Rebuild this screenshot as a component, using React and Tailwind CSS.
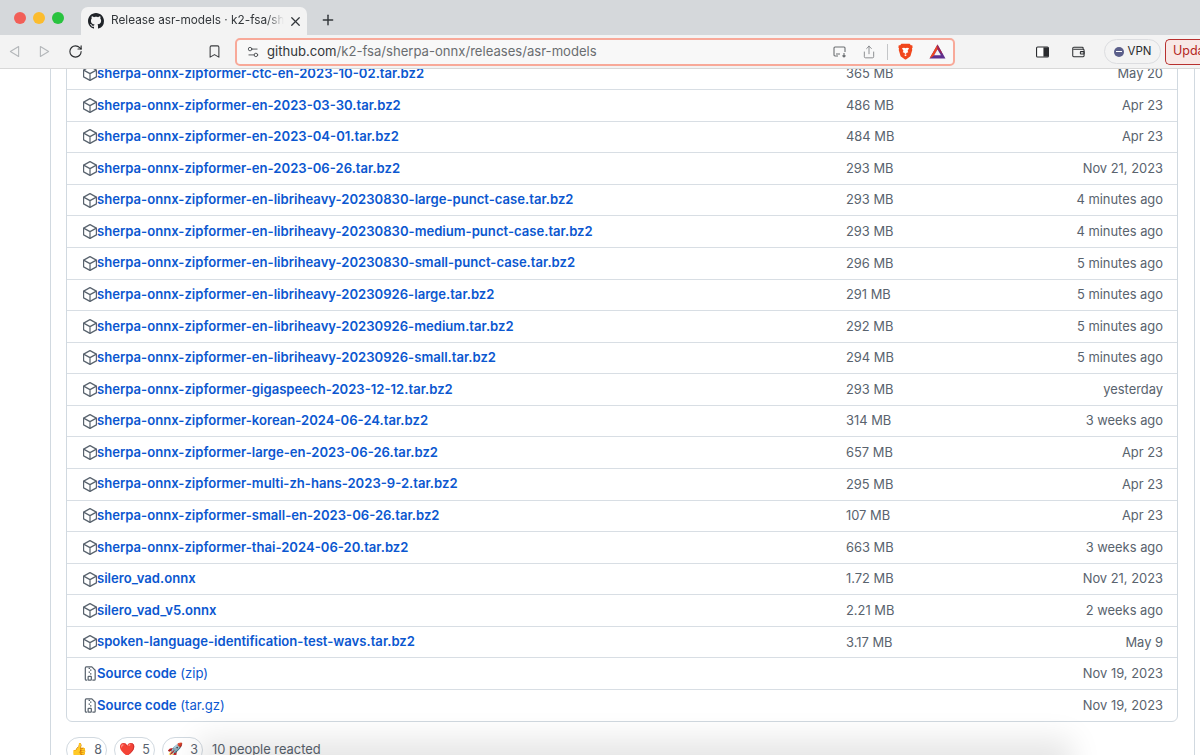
import React from "react";
import { X, Plus, RotateCw, Bookmark, Settings2, Share } from "lucide-react";

const assets = [
  { name: "sherpa-onnx-zipformer-ctc-en-2023-10-02.tar.bz2", size: "365 MB", date: "May 20" },
  { name: "sherpa-onnx-zipformer-en-2023-03-30.tar.bz2", size: "486 MB", date: "Apr 23" },
  { name: "sherpa-onnx-zipformer-en-2023-04-01.tar.bz2", size: "484 MB", date: "Apr 23" },
  { name: "sherpa-onnx-zipformer-en-2023-06-26.tar.bz2", size: "293 MB", date: "Nov 21, 2023" },
  { name: "sherpa-onnx-zipformer-en-libriheavy-20230830-large-punct-case.tar.bz2", size: "293 MB", date: "4 minutes ago" },
  { name: "sherpa-onnx-zipformer-en-libriheavy-20230830-medium-punct-case.tar.bz2", size: "293 MB", date: "4 minutes ago" },
  { name: "sherpa-onnx-zipformer-en-libriheavy-20230830-small-punct-case.tar.bz2", size: "296 MB", date: "5 minutes ago" },
  { name: "sherpa-onnx-zipformer-en-libriheavy-20230926-large.tar.bz2", size: "291 MB", date: "5 minutes ago" },
  { name: "sherpa-onnx-zipformer-en-libriheavy-20230926-medium.tar.bz2", size: "292 MB", date: "5 minutes ago" },
  { name: "sherpa-onnx-zipformer-en-libriheavy-20230926-small.tar.bz2", size: "294 MB", date: "5 minutes ago" },
  { name: "sherpa-onnx-zipformer-gigaspeech-2023-12-12.tar.bz2", size: "293 MB", date: "yesterday" },
  { name: "sherpa-onnx-zipformer-korean-2024-06-24.tar.bz2", size: "314 MB", date: "3 weeks ago" },
  { name: "sherpa-onnx-zipformer-large-en-2023-06-26.tar.bz2", size: "657 MB", date: "Apr 23" },
  { name: "sherpa-onnx-zipformer-multi-zh-hans-2023-9-2.tar.bz2", size: "295 MB", date: "Apr 23" },
  { name: "sherpa-onnx-zipformer-small-en-2023-06-26.tar.bz2", size: "107 MB", date: "Apr 23" },
  { name: "sherpa-onnx-zipformer-thai-2024-06-20.tar.bz2", size: "663 MB", date: "3 weeks ago" },
  { name: "silero_vad.onnx", size: "1.72 MB", date: "Nov 21, 2023" },
  { name: "silero_vad_v5.onnx", size: "2.21 MB", date: "2 weeks ago" },
  { name: "spoken-language-identification-test-wavs.tar.bz2", size: "3.17 MB", date: "May 9" },
  { name: "Source code", ext: "(zip)", date: "Nov 19, 2023" },
  { name: "Source code", ext: "(tar.gz)", date: "Nov 19, 2023" },
];

function PackageIcon() {
  return (
    <svg viewBox="1 0.5 14 15" className="w-[14px] h-[15px] shrink-0" fill="none" stroke="#59636e" strokeWidth="1.2" strokeLinejoin="round">
      <path d="M8 1.1 14.4 4.6v6.8L8 14.9 1.6 11.4V4.6Z" />
      <path d="M1.6 4.6 8 8.1l6.4-3.5M8 8.1v6.8" />
    </svg>
  );
}

function ZipIcon() {
  return (
    <svg viewBox="0 0 14 16" className="w-[14px] h-[15px] shrink-0" fill="none" stroke="#59636e" strokeWidth="1.3" strokeLinejoin="round">
      <path d="M4 15H3a1 1 0 0 1-1-1V2a1 1 0 0 1 1-1h6l3.5 3.5V14a1 1 0 0 1-1 1H9.5" />
      <path d="M5.5 2.5h1.5M7 4.5h1.5M5.5 6.5h1.5M7 8.5h1.5" />
      <rect x="5" y="11" width="3.4" height="4" rx="0.6" />
    </svg>
  );
}

function GithubMark() {
  return (
    <svg viewBox="0 0 16 16" className="w-4 h-4 shrink-0" fill="#1f2328">
      <path d="M8 0C3.58 0 0 3.58 0 8c0 3.54 2.29 6.53 5.47 7.59.4.07.55-.17.55-.38 0-.19-.01-.82-.01-1.49-2.01.37-2.53-.49-2.69-.94-.09-.23-.48-.94-.82-1.13-.28-.15-.68-.52-.01-.53.63-.01 1.08.58 1.23.82.72 1.21 1.87.87 2.33.66.07-.52.28-.87.51-1.07-1.78-.2-3.64-.89-3.64-3.95 0-.87.31-1.59.82-2.15-.08-.2-.36-1.02.08-2.12 0 0 .67-.21 2.2.82.64-.18 1.32-.27 2-.27s1.36.09 2 .27c1.53-1.04 2.2-.82 2.2-.82.44 1.1.16 1.92.08 2.12.51.56.82 1.27.82 2.15 0 3.07-1.87 3.75-3.65 3.95.29.25.54.73.54 1.48 0 1.07-.01 1.93-.01 2.2 0 .21.15.46.55.38A8.01 8.01 0 0 0 16 8c0-4.42-3.58-8-8-8Z" />
    </svg>
  );
}

function BraveLogo() {
  return (
    <svg viewBox="0 0 16 18" className="w-[15px] h-[17px]">
      <path d="M3.6.6h8.8l1.3 1.6 1.5.2.4 2.2-.7 1.2.3 1.6-2 6.6-4.7 3.4-.5.2-.5-.2-4.7-3.4-2-6.6.3-1.6-.7-1.2.4-2.2 1.5-.2Z" fill="#f1471d" />
      <path d="M4.2 5.6 6.4 5l1.6.6L9.6 5l2.2.6-1.6 2.6.8 1.6-1.6.6L8 12l-1.4-1.6-1.6-.6.8-1.6Z" fill="#fff" />
      <path d="M6.6 12.6 8 11.8l1.4.8L8 14Z" fill="#fff" />
    </svg>
  );
}

function RewardsLogo() {
  return (
    <svg viewBox="0 0 18 16" className="w-[17px] h-[15px]">
      <path d="M9 .5 17.5 15.5H.5Z" fill="#5f2f8e" />
      <path d="M9 .5 .5 15.5 5 12.6 9 5.5Z" fill="#f0441f" />
      <path d="M9 .5 13 7.6 14.8 11.5 9 5.5Z" fill="#a5224e" />
      <path d="M9 5.8 12.6 12H5.4Z" fill="#f3f3f3" />
    </svg>
  );
}

function AssetRow({ asset, last }) {
  return (
    <div className={`flex items-center pl-[16px] pr-[14px] ${last ? "h-[30.6px]" : "h-[31.58px] border-b border-[#d8dee4]"}`}>
      {asset.ext ? <ZipIcon /> : <PackageIcon />}
      <div className="flex-1 min-w-0 text-[13.1px] font-semibold text-[#0b57d0] whitespace-nowrap">
        {asset.name}
        {asset.ext && <span className="font-normal"> {asset.ext}</span>}
      </div>
      <div className="w-[100px] mr-[107px] text-[12.9px] text-[#59636e]">{asset.size}</div>
      <div className="w-[110px] text-right text-[12.9px] text-[#59636e]">{asset.date}</div>
    </div>
  );
}

function Reaction({ emoji, count }) {
  return (
    <div className="flex items-center justify-center gap-[7px] w-[41px] h-[26px] rounded-full border border-[#d1d9e0] text-[12.5px] text-[#59636e]">
      <span className="text-[13px]">{emoji}</span>
      {count}
    </div>
  );
}

export default function App() {
  return (
    <div className="relative w-[1200px] h-[755px] overflow-hidden flex flex-col bg-white font-['Inter','Liberation_Sans',sans-serif]">
      {/* tab strip */}
      <div className="h-[35px] shrink-0 bg-[#d5d8db] flex items-end">
        <div className="flex items-center gap-[7px] ml-[13.5px] h-[35px]">
          <span className="w-[12px] h-[12px] rounded-full bg-[#f25f58]" />
          <span className="w-[12px] h-[12px] rounded-full bg-[#fbbc2e]" />
          <span className="w-[12px] h-[12px] rounded-full bg-[#29c33f]" />
        </div>
        <div className="ml-[17.5px] w-[226px] h-[28px] bg-[#f3f3f3] rounded-t-[7px] flex items-center pl-[7px] pr-[4px] gap-[7px]">
          <GithubMark />
          <span className="flex-1 overflow-hidden whitespace-nowrap text-[11.8px] text-[#33373b] [mask-image:linear-gradient(to_right,black_90%,transparent)]">Release asr-models · k2-fsa/sherpa</span>
          <X size={15} strokeWidth={2} className="-ml-[3px] shrink-0 text-[#33373b]" />
        </div>
        <Plus size={16} strokeWidth={2.2} className="ml-[13px] mb-[7px] text-[#33373b]" />
      </div>

      {/* toolbar */}
      <div className="h-[34px] shrink-0 bg-[#f3f3f3] border-b border-[#d8d8d8] flex items-center z-10 relative">
        <svg viewBox="0 0 12 14" className="ml-[9px] w-[11px] h-[13px]" fill="none" stroke="#b4b7ba" strokeWidth="1.2" strokeLinejoin="round"><path d="M10.5 1.5 1.5 7l9 5.5Z" /></svg>
        <svg viewBox="0 0 12 14" className="ml-[19px] w-[11px] h-[13px]" fill="none" stroke="#b4b7ba" strokeWidth="1.2" strokeLinejoin="round"><path d="M1.5 1.5 10.5 7l-9 5.5Z" /></svg>
        <RotateCw size={15} strokeWidth={1.8} className="ml-[18px] text-[#2a2c2f]" />
        <Bookmark size={15} strokeWidth={1.7} className="ml-[124px] text-[#3a3c3f]" />
        <div className="ml-[13px] w-[720px] h-[28px] rounded-[5px] border-2 border-[#f8a999] bg-[#f8f8f8] flex items-center pl-[9px] pr-[7px]">
          <Settings2 size={14} strokeWidth={1.5} className="text-[#44474a]" />
          <span className="ml-[7px] text-[13.1px] text-[#333639]">github.com<span className="text-[#6a6d70]">/k2-fsa/sherpa-onnx/releases/asr-models</span></span>
          <svg viewBox="0 0 14 12" className="ml-auto w-[14px] h-[12px]" fill="none" stroke="#6b6e71" strokeWidth="1.1"><path d="M5 10H2a1 1 0 0 1-1-1V2a1 1 0 0 1 1-1h9a1 1 0 0 1 1 1v4" /><path d="M3 8h4M11 7v4M9.5 9.5 11 11l1.5-1.5" /></svg>
          <Share size={14} strokeWidth={1.3} className="ml-[15px] text-[#6b6e71]" />
          <span className="ml-[11px] w-px h-[16px] bg-[#c4c6c8]" />
          <span className="ml-[10px] flex"><BraveLogo /></span>
          <span className="ml-[16px] flex"><RewardsLogo /></span>
        </div>
        <svg viewBox="0 0 14 12" className="ml-[81px] w-[13px] h-[12px]"><rect x="0.6" y="0.6" width="12.8" height="10.8" rx="1.2" fill="#fff" stroke="#2a2c2f" strokeWidth="1.2" /><rect x="8" y="1" width="5" height="10" fill="#2a2c2f" /></svg>
        <svg viewBox="0 0 14 12" className="ml-[23px] w-[13px] h-[12px]" fill="none" stroke="#2a2c2f" strokeWidth="1.1"><path d="M12 3V1.8a1 1 0 0 0-1-1H2a1.2 1.2 0 0 0-1.2 1.2v8a1 1 0 0 0 1 1H12a1 1 0 0 0 1-1V4a1 1 0 0 0-1-1H1.5" /><rect x="9" y="5.6" width="4" height="2.6" rx="0.6" /></svg>
        <div className="ml-[19px] w-[57px] h-[25px] rounded-full border border-[#dcdde0] flex items-center justify-center gap-[4px]">
          <span className="w-[10px] h-[10px] rounded-full bg-[#5b5f8a] flex items-center justify-center"><span className="w-[6px] h-[1.5px] bg-white" /></span>
          <span className="text-[11.5px] text-[#2a2c2f]">VPN</span>
        </div>
        <div className="ml-[4px] flex-1 h-[26px] rounded-l-[5px] border border-r-0 border-[#b8312f] bg-[#f8e8e6] pl-[7px] flex items-center overflow-hidden">
          <span className="text-[12.5px] text-[#b3261e] whitespace-nowrap">Update</span>
        </div>
      </div>

      {/* page */}
      <div className="flex-1 min-h-0 overflow-hidden flex">
        <div className="ml-[50px] w-[1145px] border-x border-[#d1d9e0] pl-[15px] pr-[16px]">
          <div className="-mt-[11.5px] border border-[#d1d9e0] rounded-b-[6px]">
            {assets.map((asset, i) => (
              <AssetRow key={i} asset={asset} last={i === assets.length - 1} />
            ))}
          </div>
          <div className="mt-[15.5px] flex items-center gap-[7px]">
            <Reaction emoji="👍" count="8" />
            <Reaction emoji="❤️" count="5" />
            <Reaction emoji="🚀" count="3" />
            <span className="ml-[2px] text-[12.9px] text-[#59636e]">10 people reacted</span>
          </div>
        </div>
      </div>

      {/* soft shadow coming up from the bottom edge */}
      <div className="absolute left-[220px] right-[150px] -bottom-[36px] h-[30px] shadow-[0_0_30px_22px_rgba(0,0,0,0.1)] pointer-events-none" />
    </div>
  );
}
